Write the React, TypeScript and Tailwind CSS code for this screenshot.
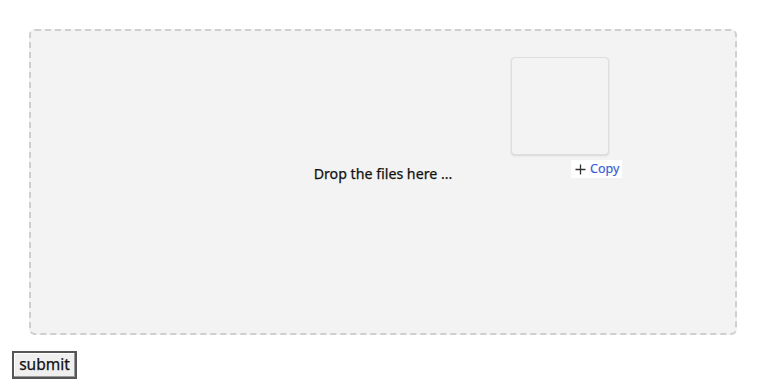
export default function App() {
  return (
    <div className="min-h-[391px] bg-white p-3 font-['Noto_Sans',sans-serif]">
      <div className="relative ml-[17px] mr-[19px] mt-[17px] flex h-[306px] items-center justify-center rounded-md border-2 border-dashed border-[#cfcfcf] bg-[#f3f3f3]">
        <p className="-mt-[16px] text-[14.2px] text-[#111] [-webkit-text-stroke:0.25px_#111]">Drop the files here ...</p>
        <div className="absolute left-[480px] top-[26px] h-[98px] w-[98px] rounded-[4px] border border-[#dddddd] bg-[#f3f3f3] shadow-[0_1px_2px_rgba(0,0,0,0.12)]" />
        <div className="absolute left-[540px] top-[129px] flex h-[18px] items-center gap-[4px] bg-white pl-[4px] pr-[3px] text-[12.5px] leading-none">
          <svg width="11" height="11" viewBox="0 0 11 11" className="shrink-0">
            <path d="M5.5 0.5V10.5M0.5 5.5H10.5" stroke="#333" strokeWidth="1.3" />
          </svg>
          <span className="text-[#3b5fd9] [-webkit-text-stroke:0.2px_#3b5fd9]">Copy</span>
        </div>
      </div>
      <button className="mt-4 h-[28px] w-[65px] border-2 border-[#555] bg-[#efefef] text-[15.5px] text-[#111] shadow-[inset_-1px_-1px_0_#999,inset_1px_1px_0_#fff] [-webkit-text-stroke:0.25px_#111]">
        submit
      </button>
    </div>
  );
}
